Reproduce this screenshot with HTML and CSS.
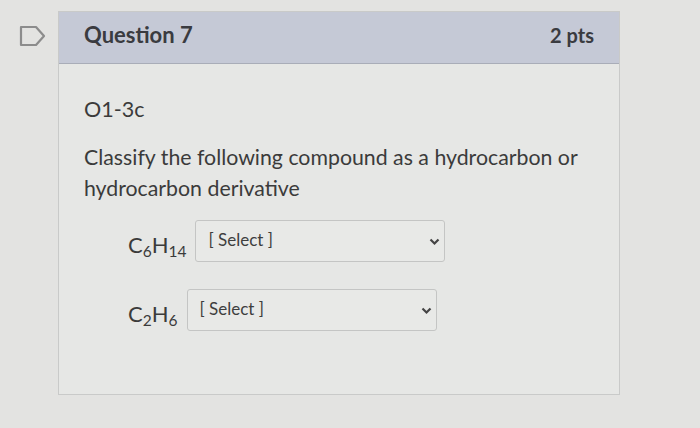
FILE: index.html
```html
<!DOCTYPE html>
<html>
<head>
<meta charset="utf-8">
<link rel="stylesheet" href="styles.css">
</head>
<body>
<div class="page">
  <div class="flag">
    <svg width="28" height="22" viewBox="0 0 28 22"><path d="M2 2 H17 L25 11 L17 20 H2 Z" fill="none" stroke="#8c8c8c" stroke-width="2.2" stroke-linejoin="round"/></svg>
  </div>
  <div class="card">
    <div class="header">
      <span class="title">Question 7</span>
      <span class="pts">2 pts</span>
    </div>
    <div class="body">
      <p class="code">O1-3c</p>
      <p class="prompt">Classify the following compound as a hydrocarbon or hydrocarbon derivative</p>
      <div class="row row1">
        <span class="formula">C<sub>6</sub>H<sub>14</sub></span>
        <div class="select"><span class="sel-text">[ Select ]</span><svg class="chev" width="11" height="8" viewBox="0 0 11 8"><path d="M1.5 1.5 L5.5 5.5 L9.5 1.5" fill="none" stroke="#444" stroke-width="2.2"/></svg></div>
      </div>
      <div class="row row2">
        <span class="formula">C<sub>2</sub>H<sub>6</sub></span>
        <div class="select"><span class="sel-text">[ Select ]</span><svg class="chev" width="11" height="8" viewBox="0 0 11 8"><path d="M1.5 1.5 L5.5 5.5 L9.5 1.5" fill="none" stroke="#444" stroke-width="2.2"/></svg></div>
      </div>
    </div>
  </div>
</div>
</body>
</html>
```
FILE: styles.css
```css
html, body {
  margin: 0;
  padding: 0;
}
body {
  width: 700px;
  height: 428px;
  background: #e3e3e1;
  font-family: Lato, "Open Sans", sans-serif;
  color: #3b3b3b;
  overflow: hidden;
}
.page {
  display: flex;
  align-items: flex-start;
  padding-top: 11px;
}
.flag {
  width: 58px;
  display: flex;
  justify-content: flex-start;
  padding-left: 19px;
  padding-top: 14px;
  box-sizing: border-box;
}
.card {
  width: 562px;
  height: 384px;
  box-sizing: border-box;
  border: 1px solid #c9cac9;
  background: #e6e7e5;
}
.header {
  height: 52px;
  box-sizing: border-box;
  background: #c5c9d6;
  border-bottom: 1px solid #a9adb8;
  display: flex;
  align-items: center;
  justify-content: space-between;
  padding: 0 25px 6px 25px;
  font-weight: 700;
  font-size: 22px;
  color: #3a3b40;
}
.pts {
  font-size: 20px;
}
.body {
  padding: 33px 25px 0 25px;
}
.code {
  margin: 0;
  font-size: 21.5px;
  line-height: 24px;
}
.prompt {
  margin: 21px 0 0 0;
  font-size: 21.3px;
  line-height: 31px;
  width: 530px;
}
.row {
  display: flex;
  align-items: center;
  padding-left: 44px;
}
.row1 {
  margin-top: 16px;
}
.row2 {
  margin-top: 27px;
}
.formula {
  font-size: 22px;
  line-height: 24px;
  margin-right: 9px;
  padding-top: 8px;
}
.formula sub {
  font-size: 15.5px;
  vertical-align: -4px;
  line-height: 0;
}
.select {
  width: 250px;
  height: 42px;
  box-sizing: border-box;
  border: 1px solid #c4c5c4;
  border-radius: 3px;
  background: #e8e9e7;
  position: relative;
}
.sel-text {
  position: absolute;
  left: 12px;
  top: 8px;
  font-size: 17px;
  color: #3e3e3e;
}
.chev {
  position: absolute;
  right: 4px;
  top: 17px;
}
```
